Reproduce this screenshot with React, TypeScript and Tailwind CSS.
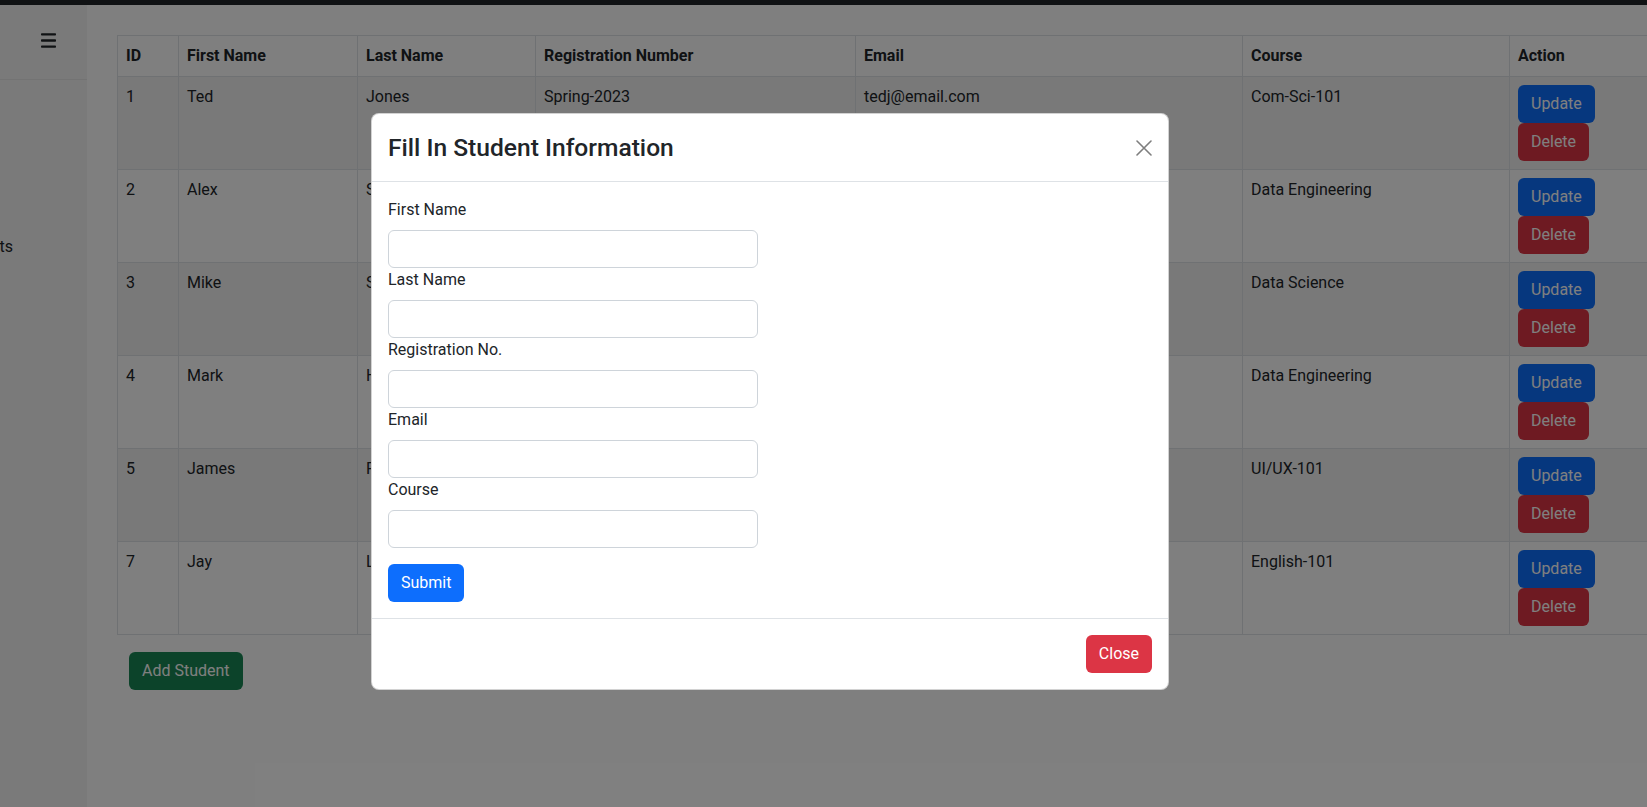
import React from "react";

const rows = [
  { id: 1, first: "Ted", last: "Jones", reg: "Spring-2023", email: "tedj@email.com", course: "Com-Sci-101" },
  { id: 2, first: "Alex", last: "Smith", reg: "Fall-2022", email: "alexs@email.com", course: "Data Engineering" },
  { id: 3, first: "Mike", last: "Scott", reg: "Spring-2022", email: "mikes@email.com", course: "Data Science" },
  { id: 4, first: "Mark", last: "Hill", reg: "Fall-2023", email: "markh@email.com", course: "Data Engineering" },
  { id: 5, first: "James", last: "Ford", reg: "Spring-2021", email: "jamesf@email.com", course: "UI/UX-101" },
  { id: 7, first: "Jay", last: "Lee", reg: "Fall-2021", email: "jayl@email.com", course: "English-101" },
];

const fields = ["First Name", "Last Name", "Registration No.", "Email", "Course"];

const btn = "border border-transparent text-white px-3 py-1.5 rounded-md leading-6";

function Bars() {
  return (
    <svg width="15" height="15" viewBox="0 0 15 15" fill="#212529">
      <rect x="0" y="0.2" width="15" height="2.4" rx="0.8" />
      <rect x="0" y="6.3" width="15" height="2.4" rx="0.8" />
      <rect x="0" y="12.4" width="15" height="2.4" rx="0.8" />
    </svg>
  );
}

function CloseX() {
  return (
    <svg width="16" height="16" viewBox="0 0 16 16" className="opacity-50">
      <path d="M1 1 L15 15 M15 1 L1 15" stroke="#000" strokeWidth="1.6" strokeLinecap="round" />
    </svg>
  );
}

export default function App() {
  return (
    <div className="relative w-screen h-screen overflow-hidden bg-white text-[#212529] font-['Roboto',sans-serif] text-base leading-6">
      <div className="h-[5px] bg-[#212529]" />
      <div className="flex h-[802px]">
        <aside className="w-[87px] shrink-0 bg-[#f4f4f4] overflow-hidden">
          <div className="h-[75px] border-b border-[#e6e6e6] flex justify-end pr-[31px] pt-[28px]">
            <Bars />
          </div>
          <div className="mt-[155px] w-[13px] flex justify-end whitespace-nowrap">
            <span>Students</span>
          </div>
        </aside>
        <main className="flex-1 min-w-0 pl-[30px] pt-[30px] overflow-visible">
          <table className="w-[1592px] table-fixed border-collapse">
            <colgroup>
              <col className="w-[61px]" />
              <col className="w-[179px]" />
              <col className="w-[178px]" />
              <col className="w-[320px]" />
              <col className="w-[387px]" />
              <col className="w-[267px]" />
              <col className="w-[200px]" />
            </colgroup>
            <thead>
              <tr>
                {["ID", "First Name", "Last Name", "Registration Number", "Email", "Course", "Action"].map((h) => (
                  <th key={h} className="border border-[#dee2e6] p-2 text-left font-bold align-top">
                    {h}
                  </th>
                ))}
              </tr>
            </thead>
            <tbody>
              {rows.map((r, i) => (
                <tr key={r.id} className={i % 2 === 0 ? "bg-[#f2f2f2]" : "bg-white"}>
                  <td className="border border-[#dee2e6] p-2 align-top">{r.id}</td>
                  <td className="border border-[#dee2e6] p-2 align-top">{r.first}</td>
                  <td className="border border-[#dee2e6] p-2 align-top">{r.last}</td>
                  <td className="border border-[#dee2e6] p-2 align-top">{r.reg}</td>
                  <td className="border border-[#dee2e6] p-2 align-top">{r.email}</td>
                  <td className="border border-[#dee2e6] p-2 align-top">{r.course}</td>
                  <td className="border border-[#dee2e6] p-2 align-top">
                    <div className="flex flex-col items-start">
                      <button className={`${btn} bg-[#0d6efd]`}>Update</button>
                      <button className={`${btn} bg-[#dc3545]`}>Delete</button>
                    </div>
                  </td>
                </tr>
              ))}
            </tbody>
          </table>
          <div className="mt-[17px] ml-3 flex">
            <button className={`${btn} bg-[#198754]`}>Add Student</button>
          </div>
        </main>
      </div>

      <div className="absolute inset-0 bg-black/50" />

      <div className="absolute left-[371px] top-[113px] w-[798px] bg-white border border-[rgba(0,0,0,0.175)] rounded-lg">
        <div className="flex items-center justify-between px-4 py-4 border-b border-[#dee2e6]">
          <h4 className="text-[24.6px] leading-[35px] font-medium">Fill In Student Information</h4>
          <button className="w-4 h-4 flex items-center justify-center">
            <CloseX />
          </button>
        </div>
        <div className="p-4">
          {fields.map((f) => (
            <div key={f}>
              <label className="block mb-2 leading-6">{f}</label>
              <input className="block w-[370px] h-[38px] border border-[#ced4da] rounded-md px-3 bg-white outline-none" />
            </div>
          ))}
          <div className="mt-4 flex">
            <button className={`${btn} bg-[#0d6efd]`}>Submit</button>
          </div>
        </div>
        <div className="flex justify-end p-4 border-t border-[#dee2e6]">
          <button className={`${btn} bg-[#dc3545]`}>Close</button>
        </div>
      </div>
    </div>
  );
}
